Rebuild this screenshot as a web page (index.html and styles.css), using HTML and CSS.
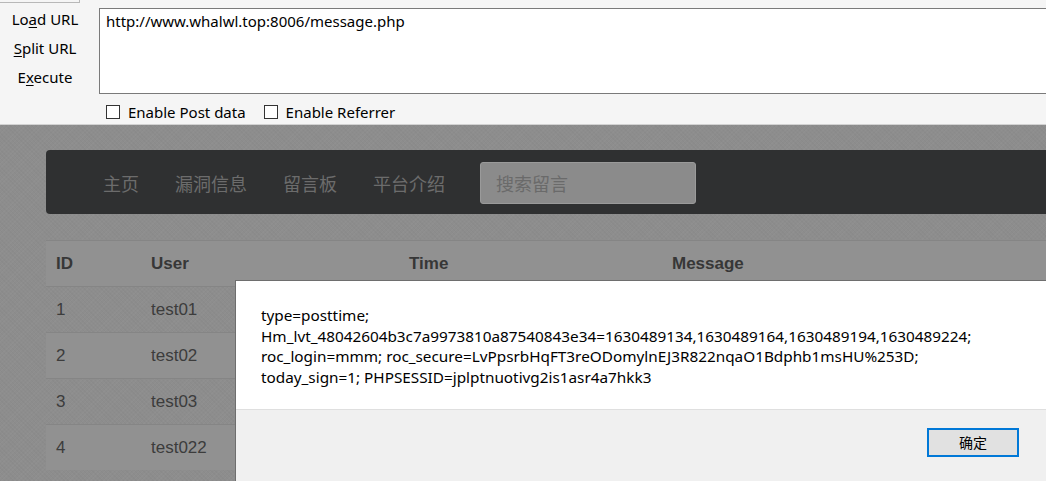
FILE: index.html
```html
<!DOCTYPE html>
<html>
<head>
<meta charset="utf-8">
<link rel="stylesheet" href="styles.css">
</head>
<body>
<div class="hackbar">
  <div class="actions">
    <div class="tabedge"></div>
    <div class="act">Lo<u>a</u>d URL</div>
    <div class="act"><u>S</u>plit URL</div>
    <div class="act">E<u>x</u>ecute</div>
  </div>
  <div class="main">
    <div class="url">http://www.whalwl.top:8006/message.php</div>
    <div class="opts">
      <label class="opt"><span class="box"></span>Enable Post data</label>
      <label class="opt"><span class="box"></span>Enable Referrer</label>
    </div>
  </div>
</div>
<div class="page">
  <div class="nav">
    <span class="nav-item">主页</span>
    <span class="nav-item">漏洞信息</span>
    <span class="nav-item">留言板</span>
    <span class="nav-item">平台介绍</span>
    <div class="search">搜索留言</div>
    <span class="nav-right">a</span>
  </div>
  <div class="table">
    <div class="row head"><span class="c1">ID</span><span class="c2">User</span><span class="c3">Time</span><span class="c4">Message</span></div>
    <div class="row"><span class="c1">1</span><span class="c2">test01</span><span class="c3"></span><span class="c4"></span></div>
    <div class="row alt"><span class="c1">2</span><span class="c2">test02</span><span class="c3"></span><span class="c4"></span></div>
    <div class="row"><span class="c1">3</span><span class="c2">test03</span><span class="c3"></span><span class="c4"></span></div>
    <div class="row alt"><span class="c1">4</span><span class="c2">test022</span><span class="c3"></span><span class="c4"></span></div>
  </div>
  <div class="dialog">
    <div class="dlg-body">type=posttime;<br>Hm_lvt_48042604b3c7a9973810a87540843e34=1630489134,1630489164,1630489194,1630489224;<br>roc_login=mmm; roc_secure=LvPpsrbHqFT3reODomylnEJ3R822nqaO1Bdphb1msHU%253D;<br>today_sign=1; PHPSESSID=jplptnuotivg2is1asr4a7hkk3</div>
    <div class="dlg-foot"><button class="ok">确定</button></div>
  </div>
</div>
</body>
</html>
```
FILE: styles.css
```css
html, body {
  margin: 0;
  padding: 0;
  width: 1046px;
  height: 481px;
  overflow: hidden;
}
body {
  font-family: "Noto Sans", "Noto Sans CJK SC", sans-serif;
  background: #8d8d8d;
}
.hackbar {
  height: 125px;
  background: #f5f5f5;
  border-bottom: 1px solid #d2d2d2;
  box-sizing: border-box;
  display: flex;
  font-size: 15px;
  color: #000;
}
.actions {
  width: 90px;
  margin-right: 9px;
  flex: none;
  text-align: center;
}
.tabedge {
  width: 79px;
  height: 2px;
  border-right: 1px solid #b8b8b8;
  border-bottom: 1px solid #b8b8b8;
}
.act {
  height: 29px;
  line-height: 29px;
}
.actions .act:nth-child(2) { margin-top: 2px; }
.act u { text-decoration-thickness: 1px; text-underline-offset: 2px; }
.main {
  flex: 1;
  min-width: 0;
}
.url {
  margin-top: 8px;
  height: 86px;
  width: 960px;
  box-sizing: border-box;
  background: #fff;
  border: 1px solid #7a7a7a;
  padding: 2px 6px;
  line-height: 20px;
  font-size: 15px;
}
.opts {
  display: flex;
  gap: 18px;
  margin-top: 9px;
  padding-left: 7px;
}
.opt {
  display: flex;
  align-items: center;
  gap: 8px;
  font-size: 15px;
  line-height: 18px;
}
.box {
  width: 14px;
  height: 14px;
  border: 1px solid #333;
  background: #fff;
  box-sizing: border-box;
  display: inline-block;
}
.page {
  position: relative;
  height: 356px;
  padding: 25px 0 0 46px;
  box-sizing: border-box;
  background-color: #8d8d8d;
  background-image:
    repeating-linear-gradient(45deg, rgba(0,0,0,0.025) 0 1px, transparent 1px 3px),
    repeating-linear-gradient(-45deg, rgba(255,255,255,0.025) 0 1px, transparent 1px 3px);
}
.nav {
  height: 64px;
  width: 1040px;
  background: #2f3031;
  border-radius: 4px;
  display: flex;
  align-items: center;
  padding-left: 57px;
  gap: 36px;
  box-sizing: border-box;
  font-family: "Noto Sans CJK SC", sans-serif;
  font-size: 18px;
  color: #6c6c6c;
  padding-top: 1px;
}
.search {
  width: 216px;
  height: 42px;
  box-sizing: border-box;
  background: #8b8b8b;
  border: 1px solid #9a9a9a;
  border-radius: 3px;
  padding-left: 15px;
  line-height: 40px;
  color: #6a6a6a;
  margin-left: -1px;
}
.nav-right {
  margin-left: 315px;
  font-family: "Liberation Sans", sans-serif;
  font-size: 16px;
  color: #6a7580;
}
.table {
  margin-top: 26px;
  width: 1000px;
  font-family: "Liberation Sans", Arial, sans-serif;
  font-size: 17px;
  color: #3c3c3c;
}
.row {
  display: flex;
  height: 46px;
  align-items: center;
  border-top: 1px solid #858585;
  box-sizing: border-box;
}
.row.head {
  font-weight: bold;
  background: #919191;
  color: #373737;
}
.row.alt { background: #919191; }
.c1 { width: 105px; padding-left: 10px; box-sizing: border-box; }
.c2 { width: 258px; }
.c3 { width: 263px; }
.c4 { flex: 1; }
.dialog {
  position: absolute;
  left: 235px;
  top: 155px;
  width: 830px;
  height: 220px;
  background: #f0f0f0;
  border: 1px solid #6e6e6e;
  box-sizing: border-box;
  font-family: "Noto Sans", "Noto Sans CJK SC", sans-serif;
}
.dlg-body {
  background: #fff;
  height: 129px;
  box-sizing: border-box;
  padding: 24px 0 0 25px;
  font-size: 15.3px;
  line-height: 20.5px;
  color: #000;
  border-bottom: 1px solid #dfdfdf;
}
.dlg-foot {
  padding: 18px 0 0 691px;
}
.ok {
  width: 92px;
  height: 29px;
  border: 2px solid #0078d7;
  background: #e1e1e1;
  font-family: "Noto Sans CJK SC", sans-serif;
  font-size: 14px;
  color: #000;
  padding: 0;
  line-height: 25px;
}
```
